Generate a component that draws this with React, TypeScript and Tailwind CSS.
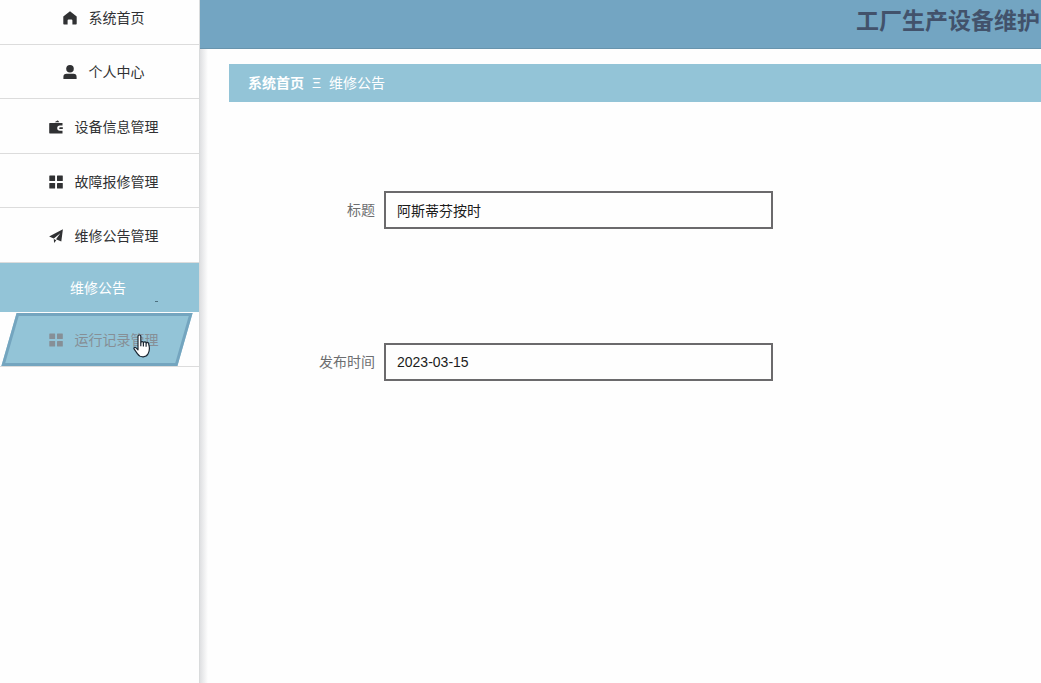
import { useState, type ReactNode } from "react";

type MenuEntry = {
  key: string;
  label: string;
  icon: ReactNode;
};

function Icon({ children }: { children: ReactNode }) {
  return (
    <svg viewBox="0 0 14 14" className="h-3.5 w-3.5 shrink-0" fill="currentColor" aria-hidden="true">
      {children}
    </svg>
  );
}

const homeIcon = (
  <Icon>
    <path d="M7 .3 13.7 5.6V12.800a.7.7 0 0 1-.7.7H9.400V9.600a1 1 0 0 0-1-1H5.600a1 1 0 0 0-1 1v3.900H1a.7.7 0 0 1-.7-.7V5.600Z" />
  </Icon>
);

const userIcon = (
  <Icon>
    <circle cx="7" cy="3.8" r="3.8" />
    <path d="M.4 14v-2.1a3.1 3.1 0 0 1 3.1-3.1h7a3.1 3.1 0 0 1 3.1 3.1V14Z" />
  </Icon>
);

const walletIcon = (
  <Icon>
    <path d="M5.6 2.2 8.4.6a.6.6 0 0 1 .8.2l1.200 1.400Z" />
    <path d="M.8 2.900h12.700v2.500h-2.600a2.700 2.700 0 0 0 0 5.400h2.600v2.600H.8a.6.6 0 0 1-.6-.6V3.500a.6.6 0 0 1 .6-.6Z" />
    <path d="M11.100 7.300h2.700v1.800h-2.700a.9.900 0 0 1 0-1.800Z" />
  </Icon>
);

const gridIcon = (
  <Icon>
    <rect x=".3" y=".6" width="5.8" height="5.5" rx=".5" />
    <rect x="8" y=".6" width="5.8" height="5.5" rx=".5" />
    <rect x=".3" y="8" width="5.8" height="5.5" rx=".5" />
    <rect x="8" y="8" width="5.8" height="5.5" rx=".5" />
  </Icon>
);

const sendIcon = (
  <Icon>
    <path d="M.1 7.400 13.900.3 12.300 12.500 7 10.300 11.300 4.200 4.800 9.400Z" />
    <path d="M4.800 10.100 7.300 11.200 5.100 14Z" />
  </Icon>
);

const menu: MenuEntry[] = [
  { key: "home", label: "系统首页", icon: homeIcon },
  { key: "profile", label: "个人中心", icon: userIcon },
  { key: "device", label: "设备信息管理", icon: walletIcon },
  { key: "fault", label: "故障报修管理", icon: gridIcon },
  { key: "notice", label: "维修公告管理", icon: sendIcon },
];

function HandPointer() {
  return (
    <svg
      viewBox="0 0 18 24"
      className="pointer-events-none absolute top-[22px] left-[133px] h-6 w-[18px]"
      fill="#fff"
      stroke="#1b2733"
      strokeWidth="1.2"
      strokeLinejoin="round"
      aria-hidden="true"
    >
      <path d="M5 2.4a1.4 1.4 0 0 1 2.8 0v6.3a1.3 1.3 0 0 1 2.6.3 1.3 1.3 0 0 1 2.7.5 1.3 1.3 0 0 1 2.6.7c1.200 3.800.8 7-.6 9.500a6 6 0 0 1-4.800 3.100c-2.700.1-4.700-1-5.800-3L1.200 15.200c-.9-1.500.8-2.500 1.900-1.400L5 15.800Z" />
      <path d="M7.800 8.700v3.500M10.400 9v3.400M13.100 9.500v3.200" fill="none" />
    </svg>
  );
}

function Sidebar() {
  return (
    <aside className="relative w-[200px] shrink-0 overflow-hidden border-r border-[#d9dbdc] bg-[#fefefe] text-sm text-[#303133]">
      {/* the list is scrolled a little, so the first entry is cut at the top */}
      <nav className="-mt-[10px]">
        <ul className="flex h-[273px] flex-col">
          {menu.map((item) => (
            <li key={item.key} className="flex-1 border-b border-[#dcdcdc]">
              <button type="button" className="flex h-full w-full items-center justify-center gap-3 pt-0.5 pl-2">
                {item.icon}
                <span>{item.label}</span>
              </button>
            </li>
          ))}
        </ul>

        <button
          type="button"
          className="relative flex h-[49px] w-full items-center bg-[#93c4d7] pl-[70px] text-white"
        >
          维修公告
          <span className="absolute right-[41px] bottom-2.5 h-px w-[3px] bg-[#4d6f7e]" />
        </button>

        <div className="relative h-[55px] border-b border-[#dcdcdc]">
          <span className="absolute top-px bottom-0 left-[9px] right-[14px] -skew-x-[16deg] border-[3px] border-[#74a5bf] bg-[#93c4d7]" />
          <button
            type="button"
            className="relative flex h-full w-full items-center justify-center gap-3 pt-0.5 pl-2 text-[#868f96]"
          >
            {gridIcon}
            <span>运行记录管理</span>
          </button>
          <HandPointer />
        </div>
      </nav>
    </aside>
  );
}

function Field({
  id,
  label,
  value,
  onChange,
}: {
  id: string;
  label: string;
  value: string;
  onChange: (value: string) => void;
}) {
  return (
    <div className="flex items-center gap-[9px]">
      <label htmlFor={id} className="w-[146px] shrink-0 text-right text-sm text-[#6d6e70]">
        {label}
      </label>
      <input
        id={id}
        type="text"
        value={value}
        onChange={(e) => onChange(e.target.value)}
        className="h-[38px] w-full max-w-[389px] border-2 border-[#6b6a6c] bg-[#fefefe] px-[11px] text-sm text-[#1c1c1c] outline-none"
      />
    </div>
  );
}

export default function App() {
  const [title, setTitle] = useState("阿斯蒂芬按时");
  const [date, setDate] = useState("2023-03-15");

  return (
    <div className="flex min-h-screen bg-[#fefefe] font-['Liberation_Sans','Noto_Sans_CJK_SC',sans-serif]">
      <Sidebar />

      <div className="min-w-0 flex-1">
        <header className="flex h-[49px] items-center justify-end border-b border-[#6894ad] bg-[#73a5c2] pr-px pb-[6px]">
          <h1 className="text-[23px] font-bold whitespace-nowrap text-[#42526b]">工厂生产设备维护</h1>
        </header>

        <div className="flex">
          {/* soft edge cast by the sidebar */}
          <div className="min-h-[calc(100vh-49px)] w-2 shrink-0 bg-linear-to-r from-[#dfe0e2] to-[#fefefe]" />

          <main className="min-w-0 flex-1 pt-[15px] pl-[21px]">
            <nav className="flex h-[38px] items-center gap-2 bg-[#93c4d7] pl-[19px] text-sm text-white">
              <a href="#home" className="font-bold">
                系统首页
              </a>
              <span>Ξ</span>
              <span>维修公告</span>
            </nav>

            <form className="flex flex-col gap-[114px] pt-[89px]" onSubmit={(e) => e.preventDefault()}>
              <Field id="title" label="标题" value={title} onChange={setTitle} />
              <Field id="publish-date" label="发布时间" value={date} onChange={setDate} />
            </form>
          </main>
        </div>
      </div>
    </div>
  );
}
